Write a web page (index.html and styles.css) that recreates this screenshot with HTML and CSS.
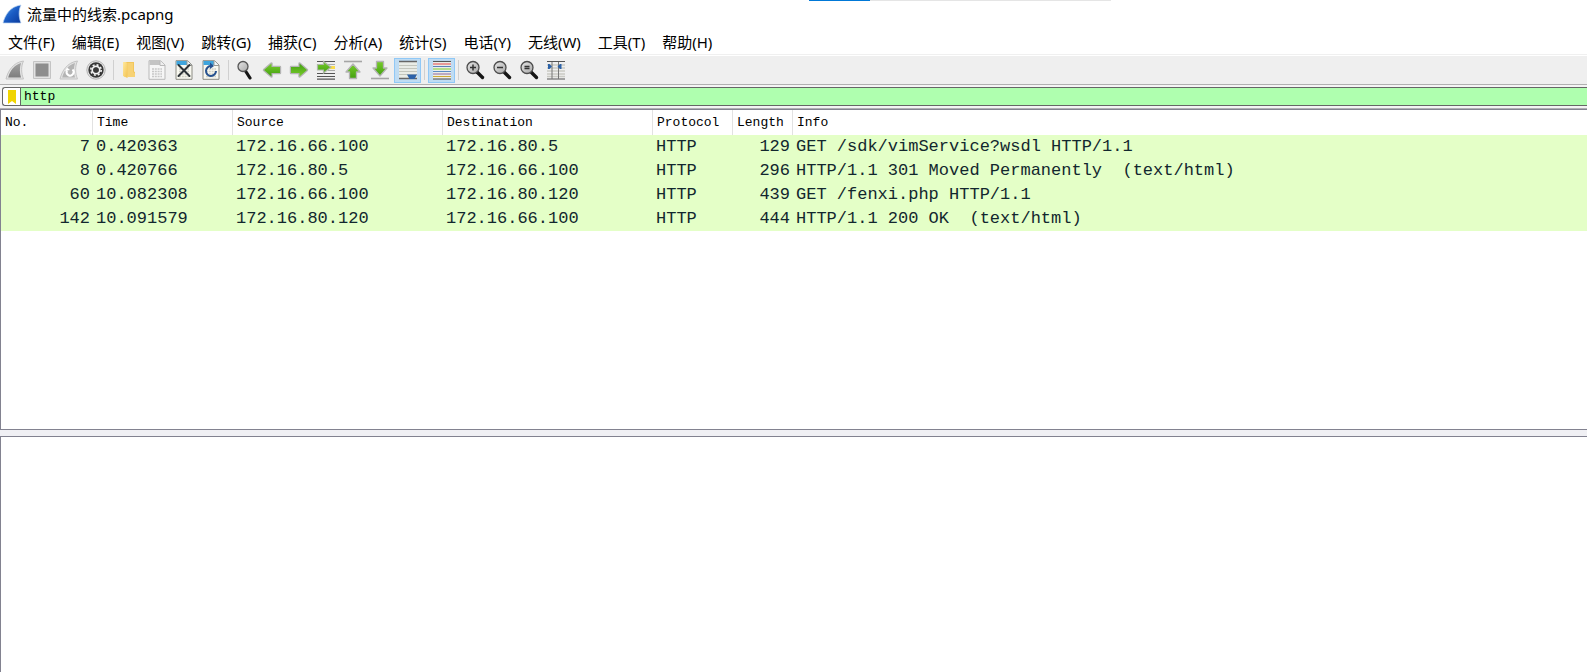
FILE: index.html
```html
<!DOCTYPE html>
<html lang="zh-CN">
<head>
<meta charset="utf-8">
<title>流量中的线索.pcapng</title>
<link rel="stylesheet" href="styles.css">
</head>
<body>
<svg class="defs" aria-hidden="true">
  <defs>
    <linearGradient id="blueFin" x1="0" y1="0" x2="1" y2="1"><stop offset="0" stop-color="#4f9be8"/><stop offset=".5" stop-color="#1a5cc4"/><stop offset="1" stop-color="#0b3a9c"/></linearGradient>
    <linearGradient id="greyFin" x1="0" y1="0" x2="0" y2="1"><stop offset="0" stop-color="#a2a2a2"/><stop offset="1" stop-color="#7e7e7e"/></linearGradient>
    <linearGradient id="green" x1="0" y1="0" x2="0" y2="1"><stop offset="0" stop-color="#78cc2c"/><stop offset="1" stop-color="#43a010"/></linearGradient>
    <linearGradient id="lens" x1="0" y1="0" x2="1" y2="1"><stop offset="0" stop-color="#e6e6e6"/><stop offset="1" stop-color="#a8a8a8"/></linearGradient>
    <linearGradient id="folder" x1="0" y1="0" x2="1" y2="1"><stop offset="0" stop-color="#ffe9a0"/><stop offset="1" stop-color="#f3c350"/></linearGradient>
    <path id="arrow" d="M2 10 9.500 3.500V7H18v6H9.500v3.500z"/>
    <g id="dots"><path d="M5 9h10M5 11.500h10M5 14h10M5 16.500h10" stroke-width="1.500" stroke-dasharray="2 .8"/></g>
    <g id="glass"><path d="m12 12 5.500 5.500" stroke="#161616" stroke-width="3.400" stroke-linecap="round"/><circle cx="8" cy="7.500" r="6" fill="url(#lens)" stroke="#4c4c4c" stroke-width="1.300"/></g>
  </defs>
</svg>

<div class="progress"><span class="progress-done"></span></div>

<header class="titlebar">
  <svg class="logo" viewBox="0 0 20 20"><path d="M1 19C3 11 8 2.500 19 1c-2.500 5-2.500 12 0 18z" fill="url(#blueFin)" stroke="#b9d2f1" stroke-width=".7"/></svg>
  <h1 class="title">流量中的线索.pcapng</h1>
</header>

<nav class="menubar">
  <button class="menu">文件(F)</button>
  <button class="menu">编辑(E)</button>
  <button class="menu">视图(V)</button>
  <button class="menu">跳转(G)</button>
  <button class="menu">捕获(C)</button>
  <button class="menu">分析(A)</button>
  <button class="menu">统计(S)</button>
  <button class="menu">电话(Y)</button>
  <button class="menu">无线(W)</button>
  <button class="menu">工具(T)</button>
  <button class="menu">帮助(H)</button>
</nav>

<div class="toolbar" role="toolbar">
  <button class="tool" aria-label="Start capture"><svg viewBox="0 0 20 20"><path d="M1 19C3 11 8 2.500 18.500 1c-2.500 5-2.500 12 0 18z" fill="#e2e2e2" stroke="#c4c4c4"/><path d="M3.200 17.500C5 11 9 5 16 3c-1.500 4.500-1.500 10 0 14.500z" fill="url(#greyFin)"/></svg></button>
  <button class="tool" aria-label="Stop capture"><svg viewBox="0 0 20 20"><path d="M1.500 1.500h17v17h-17z" fill="#e2e2e2" stroke="#c4c4c4"/><path d="M3.500 3.500h13v13h-13z" fill="#8d8d8d"/></svg></button>
  <button class="tool" aria-label="Restart capture"><svg viewBox="0 0 20 20"><path d="M1 19C3 11 8 2.500 18.500 1c-2.500 5-2.500 12 0 18z" fill="#e2e2e2" stroke="#c4c4c4"/><path d="M3.200 17.500C5 11 9 5 16 3c-1.500 4.500-1.500 10 0 14.500z" fill="#b4b4b4"/><path d="M8 10.500a3.500 3.500 0 1 0 5.500-1" fill="none" stroke="#fff" stroke-width="2"/><path d="m6 11 2-3.500 3 2.500z" fill="#fff"/></svg></button>
  <button class="tool" aria-label="Capture options"><svg viewBox="0 0 20 20"><circle cx="10" cy="10" r="9.200" fill="#e8e8e8" stroke="#b2b2b2"/><circle cx="10" cy="10" r="7.700" fill="#383838"/><circle cx="10" cy="10" r="3.700" fill="none" stroke="#f2f2f2" stroke-width="1.800"/><circle cx="10" cy="10" r="5.200" fill="none" stroke="#f2f2f2" stroke-width="1.600" stroke-dasharray="2 2.080"/><circle cx="10" cy="10" r="2.600" fill="#383838"/></svg></button>
  <span class="sep"></span>
  <button class="tool" aria-label="Open"><svg viewBox="0 0 20 20"><path d="M6 2h8v9.500l1 .5v4.500H4z" fill="#f2c65c"/><path d="M3 2h3l1.500 1.500V18L3 16z" fill="url(#folder)"/><path d="M7.500 3H13v9l2 1.500V17H7.500z" fill="#f7d274"/></svg></button>
  <button class="tool" aria-label="Save"><svg viewBox="0 0 20 20"><path d="M2 .7h11.500L18 5v14.300H2z" fill="#f6f6f6" stroke="#b9b9b9"/><path d="M2.500 1H13l1 4H2.500z" fill="#c4c4c4"/><path d="M13 1v4.500h5" fill="#eee" stroke="#b9b9b9"/><use href="#dots" stroke="#c8c8c8"/></svg></button>
  <button class="tool" aria-label="Close"><svg viewBox="0 0 20 20"><path d="M2 .7h11.500L18 5v14.300H2z" fill="#f8f8f0" stroke="#8c8c84"/><path d="M2.500 1H13l1 4H2.500z" fill="#3fa5dd"/><path d="M13 1v4.500h5" fill="#eef6fa" stroke="#9a9a94"/><use href="#dots" stroke="#cfcfc4"/><path d="m4.500 5 11 11m0-11-11 11" stroke="#2d3338" stroke-width="2" stroke-linecap="round"/></svg></button>
  <button class="tool" aria-label="Reload"><svg viewBox="0 0 20 20"><path d="M2 .7h11.500L18 5v14.300H2z" fill="#f8f8f0" stroke="#8c8c84"/><path d="M2.500 1H13l1 4H2.500z" fill="#3fa5dd"/><path d="M13 1v4.500h5" fill="#eef6fa" stroke="#9a9a94"/><use href="#dots" stroke="#cfcfc4"/><path d="M15 11a5 5 0 1 1-4.500-5" fill="none" stroke="#27528f" stroke-width="2"/><path d="M9 2.500 13 6 9 9z" fill="#27528f"/></svg></button>
  <span class="sep"></span>
  <button class="tool" aria-label="Find"><svg viewBox="0 0 20 20"><path d="m10.500 11 4.500 7" stroke="#161616" stroke-width="3.200" stroke-linecap="round"/><circle cx="8" cy="6.500" r="5" fill="url(#lens)" stroke="#555" stroke-width="1.300"/></svg></button>
  <button class="tool" aria-label="Back"><svg viewBox="0 0 20 20"><use href="#arrow" fill="#b4b4b4" stroke="#b4b4b4" stroke-width="2.400" stroke-linejoin="round"/><use href="#arrow" fill="url(#green)"/></svg></button>
  <button class="tool" aria-label="Forward"><svg viewBox="0 0 20 20"><g transform="rotate(180 10 10)"><use href="#arrow" fill="#b4b4b4" stroke="#b4b4b4" stroke-width="2.400" stroke-linejoin="round"/><use href="#arrow" fill="url(#green)"/></g></svg></button>
  <button class="tool" aria-label="Go to packet"><svg viewBox="0 0 20 20"><path d="M1 1.500h18M1 13.500h18M1 16.500h18M1 19.200h18" stroke="#555" stroke-width="1.200"/><path d="M12 4.500h7M12 10.500h7" stroke="#aaa"/><path d="M14 6h5v3h-5z" fill="#fbdc4d"/><path d="M1.500 4.500h6V1.500l7.500 5.700-7.500 5.800v-3h-6z" fill="url(#green)" stroke="#aeb8a7" stroke-width="1.200"/></svg></button>
  <button class="tool" aria-label="First packet"><svg viewBox="0 0 20 20"><path d="M1 1.500h18" stroke="#a5a5a5" stroke-width="1.600"/><path d="m10 4 7 8h-3.500v6.500h-7V12H3z" fill="url(#green)" stroke="#b4b4b4" stroke-width="1.300" stroke-linejoin="round"/></svg></button>
  <button class="tool" aria-label="Last packet"><svg viewBox="0 0 20 20"><path d="M1 18.500h18" stroke="#a5a5a5" stroke-width="1.600"/><path d="m10 16 7-8h-3.500V1.500h-7V8H3z" fill="url(#green)" stroke="#b4b4b4" stroke-width="1.300" stroke-linejoin="round"/></svg></button>
  <button class="tool tool-on" aria-label="Auto scroll" aria-pressed="true"><svg viewBox="0 0 20 20"><path d="M1 1h18v18H1z" fill="#e9ece6"/><path d="M1 1.500h18M1 18.500h18" stroke="#666" stroke-width="1.400"/><path d="M1 5.500h18M1 8.500h18M1 11.500h18M1 14.500h18" stroke="#c3c6bd" stroke-width="1.200"/><path d="M9 14.500h10L16.500 19h-5z" fill="#2c62a8"/></svg></button>
  <span class="sep"></span>
  <button class="tool tool-on" aria-label="Colorize" aria-pressed="true"><svg viewBox="0 0 20 20"><path d="M1 1h18v18H1z" fill="#f0f2ee"/><g stroke-width="1.100"><path d="M1 1.500h18" stroke="#555"/><path d="M1 4h18" stroke="#e35353"/><path d="M1 6.500h18" stroke="#5f7fb8"/><path d="M1 9h18" stroke="#83cc3c"/><path d="M1 11.500h18" stroke="#5b8bc4"/><path d="M1 14h18" stroke="#94709e"/><path d="M1 16.500h18" stroke="#cda935"/><path d="M1 19h18" stroke="#555"/></g></svg></button>
  <span class="sep"></span>
  <button class="tool" aria-label="Zoom in"><svg viewBox="0 0 20 20"><use href="#glass"/><path d="M5 7.500h6M8 4.500v6" stroke="#333" stroke-width="1.500"/></svg></button>
  <button class="tool" aria-label="Zoom out"><svg viewBox="0 0 20 20"><use href="#glass"/><path d="M5 7.500h6" stroke="#333" stroke-width="1.500"/></svg></button>
  <button class="tool" aria-label="Normal size"><svg viewBox="0 0 20 20"><use href="#glass"/><path d="M5.500 6.500h5M5.500 8.500h5" stroke="#333" stroke-width="1.300"/></svg></button>
  <button class="tool" aria-label="Resize columns"><svg viewBox="0 0 20 20"><path d="M1 5h18M1 8h18M1 11h18M1 14h18M1 16.500h18" stroke="#cacac4" stroke-width="1.300"/><path d="M1 1.500h18M1 19h18" stroke="#555" stroke-width="1.200"/><path d="M6 2v17M12.500 2v17" stroke="#777"/><path d="M2 4h1.500L6 6.500 3.500 9H2zM15.500 4H14L11.500 6.500 14 9h1.500z" fill="#2c62a8"/></svg></button>
</div>

<form class="filterbar">
  <div class="filter">
    <button class="bookmark" type="button" aria-label="Bookmark"><svg viewBox="0 0 10 14"><path d="M1 0h8v14l-4-3-4 3z" fill="#f0d400"/></svg></button>
    <input class="filter-input" type="text" value="http" aria-label="Display filter" spellcheck="false">
  </div>
</form>

<main class="panes">
  <section class="pane packets">
    <table class="list">
      <colgroup><col class="c-no"><col class="c-time"><col class="c-addr"><col class="c-addr"><col class="c-proto"><col class="c-len"><col></colgroup>
      <thead>
        <tr><th>No.</th><th>Time</th><th>Source</th><th>Destination</th><th>Protocol</th><th>Length</th><th>Info</th></tr>
      </thead>
      <tbody>
        <tr><td class="num">7</td><td>0.420363</td><td>172.16.66.100</td><td>172.16.80.5</td><td>HTTP</td><td class="num">129</td><td>GET /sdk/vimService?wsdl HTTP/1.1</td></tr>
        <tr><td class="num">8</td><td>0.420766</td><td>172.16.80.5</td><td>172.16.66.100</td><td>HTTP</td><td class="num">296</td><td>HTTP/1.1 301 Moved Permanently  (text/html)</td></tr>
        <tr><td class="num">60</td><td>10.082308</td><td>172.16.66.100</td><td>172.16.80.120</td><td>HTTP</td><td class="num">439</td><td>GET /fenxi.php HTTP/1.1</td></tr>
        <tr><td class="num">142</td><td>10.091579</td><td>172.16.80.120</td><td>172.16.66.100</td><td>HTTP</td><td class="num">444</td><td>HTTP/1.1 200 OK  (text/html)</td></tr>
      </tbody>
    </table>
  </section>
  <section class="pane details"></section>
</main>
</body>
</html>
```

FILE: styles.css
```css
* { box-sizing: border-box; }

body {
  margin: 0;
  height: 100vh;
  display: flex;
  flex-direction: column;
  overflow: hidden;
  background: #fff;
  color: #000;
  font: 15px/20px "Noto Sans", "Noto Sans CJK SC", sans-serif;
}

button {
  margin: 0;
  padding: 0;
  border: 0;
  background: none;
  color: inherit;
  font: inherit;
}

svg { display: block; }

.defs { position: absolute; width: 0; height: 0; }

.progress {
  position: absolute;
  top: 0;
  left: 51%;
  width: 19%;
  height: 1px;
  background: #e5e5e5;
}
.progress-done { display: block; width: 20%; height: 1px; background: #0078d7; }

.titlebar {
  display: flex;
  align-items: center;
  gap: 5px;
  height: 28px;
  padding-left: 2px;
}
.logo { width: 20px; height: 20px; }
.title { margin: 0; font-size: 15px; font-weight: 400; }

.menubar {
  display: flex;
  gap: 17px;
  height: 27px;
  padding: 4px 8px 2px;
  border-bottom: 1px solid #f0f0f0;
}
.menu { white-space: nowrap; }

.toolbar {
  display: flex;
  align-items: center;
  height: 30px;
  padding-left: 2px;
  border-top: 1px solid #fff;
  border-bottom: 1px solid #b0b0b0;
  background: #efefef;
}
.tool {
  display: flex;
  align-items: center;
  justify-content: center;
  width: 27px;
  height: 25px;
  padding-right: 2px;
}
.tool svg { width: 20px; height: 20px; }
.tool-on { padding-right: 0; border: 1px solid #90c8f6; background: #bfdcf3; }
.sep { width: 7px; height: 20px; padding: 0 3px; background: #d0d0d0; background-clip: content-box; }

.filterbar {
  margin: 0;
  padding: 2px 0 2px 2px;
  background: #f4f4f4;
}
.filter {
  display: flex;
  height: 19px;
  border: 1px solid #666;
  border-right: 0;
  border-radius: 3px 0 0 3px;
  background: #fff;
}
.bookmark {
  display: flex;
  align-items: center;
  justify-content: center;
  width: 18px;
  border-right: 1px solid #666;
}
.bookmark svg { width: 10px; height: 14px; }
.filter-input {
  flex: 1;
  min-width: 0;
  padding: 1px 3px 0;
  border: 0;
  outline: 0;
  background: #afffaf;
  color: #000;
  font: 13px/16px "Liberation Mono", monospace;
}

.panes {
  flex: 1;
  display: flex;
  flex-direction: column;
  gap: 6px;
  min-height: 0;
  border-top: 1px solid #b0b0b4;
  background: #f0f0f4;
}
.pane {
  min-height: 0;
  border-top: 1px solid #828290;
  border-left: 1px solid #828290;
  background: #fff;
}
.packets { flex: 321 1 0; border-bottom: 1px solid #828290; }
.details { flex: 236 1 0; }

.list {
  width: 100%;
  table-layout: fixed;
  border-collapse: separate;
  border-spacing: 0;
}
.c-no { width: 92px; }
.c-time { width: 140px; }
.c-addr { width: 210px; }
.c-proto { width: 80px; }
.c-len { width: 60px; }

th {
  height: 25px;
  padding: 1px 4px 0;
  border-right: 1px solid #e2e2e2;
  text-align: left;
  font: 13px/24px "Liberation Mono", monospace;
  white-space: nowrap;
}
th:last-child { border-right: 0; }
td {
  height: 24px;
  padding: 0 3px;
  background: #e4ffc7;
  color: #12272e;
  font: 17px/24px "Liberation Mono", monospace;
  white-space: pre;
}
.num { text-align: right; }
```
